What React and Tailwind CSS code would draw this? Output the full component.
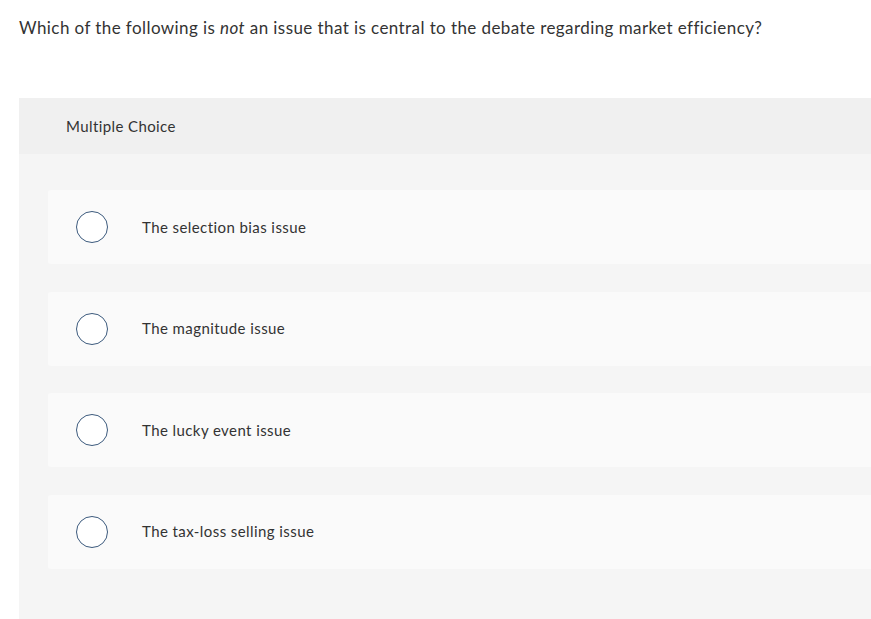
export default function App() {
  const options = [
    "The selection bias issue",
    "The magnitude issue",
    "The lucky event issue",
    "The tax-loss selling issue",
  ];
  return (
    <div className="w-[871px] h-[619px] overflow-hidden bg-white text-[#333] font-['Lato','Open_Sans',sans-serif]">
      <div className="pl-[19px] pt-[15px] h-[98px] text-[17px] leading-[26px] tracking-[0.42px] text-[#333]">
        Which of the following is <i>not</i> an issue that is central to the debate regarding market efficiency?
      </div>
      <div className="ml-[19px] bg-[#f5f5f5] h-[521px]">
        <div className="h-[56px] bg-[#f0f0f0] pl-[47px] flex items-center text-[15px] tracking-[0.4px] text-[#333]">
          Multiple Choice
        </div>
        <div className="pl-[29px] pt-[36px] flex flex-col gap-[27.5px]">
          {options.map((o) => (
            <div key={o} className="h-[74px] bg-[#fafafa] rounded-l-[3px] flex items-center">
              <div className="ml-[28px] w-[32px] h-[32px] rounded-full border-[1.5px] border-[#3c5a7d] bg-white" />
              <div className="ml-[34px] text-[15px] tracking-[0.42px] text-[#333]">{o}</div>
            </div>
          ))}
        </div>
      </div>
    </div>
  );
}
